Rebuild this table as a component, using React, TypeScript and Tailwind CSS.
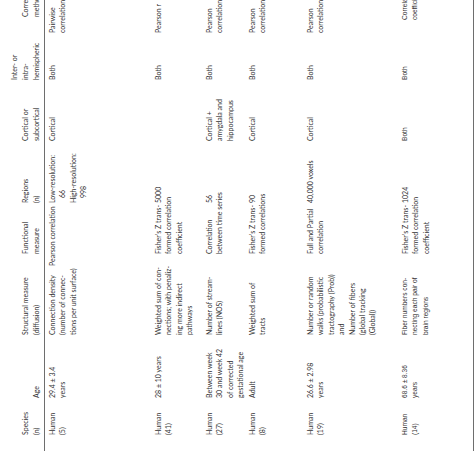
const colW = [
  "w-[37px]",
  "w-[63px]",
  "w-[81px]",
  "w-[51px]",
  "w-[62px]",
  "w-[61px]",
  "w-[47px]",
  "w-[60px]",
];

type Cell = { lines: string[]; cls?: string; lineCls?: string[] };

const header: Cell[] = [
  { lines: ["Species", "(n)"] },
  { lines: ["Age"] },
  { lines: ["Structural measure", "(diffusion)"] },
  { lines: ["Functional", "measure"] },
  { lines: ["Regions", "(n)"] },
  { lines: ["Cortical or", "subcortical"] },
  { lines: ["Inter- or", "intra-", "hemispheric"] },
  { lines: ["Correlation", "method"], cls: "pl-[16px]" },
];

const arial = "font-['Liberation_Sans',Arial,sans-serif] text-[6.6px]";

const rows: { h: string; cells: Cell[] }[] = [
  {
    h: "h-[106px]",
    cells: [
      { lines: ["Human", "(5)"] },
      { lines: ["29.4 ± 3.4", "years"] },
      { lines: ["Connection density", "(number of connec-", "tions per unit surface)"] },
      { lines: ["Pearson correlation"], cls: "-ml-[12px] mr-[12px]" },
      {
        lines: ["Low-resolution:", "66", "High-resolution:", "998"],
        lineCls: ["", "pl-[5px]", "", "pl-[5px]"],
      },
      { lines: ["Cortical"] },
      { lines: ["Both"] },
      { lines: ["Pairwise", "correlation"] },
    ],
  },
  {
    h: "h-[51px]",
    cells: [
      { lines: ["Human", "(41)"] },
      { lines: ["28 ± 10 years"] },
      { lines: ["Weighted sum of con-", "nections; with penaliz-", "ing more indirect", "pathways"] },
      { lines: ["Fisher’s Z trans-", "formed correlation", "coefficient"] },
      { lines: ["5000"] },
      { lines: [] },
      { lines: ["Both"] },
      { lines: ["Pearson r"] },
    ],
  },
  {
    h: "h-[43px]",
    cells: [
      { lines: ["Human", "(27)"] },
      { lines: ["Between week", "30 and week 42", "of corrected", "gestational age"] },
      { lines: ["Number of stream-", "lines (NOS)"] },
      { lines: ["Correlation", "between time series"] },
      { lines: ["56"] },
      { lines: ["Cortical +", "amygdala and", "hippocampus"] },
      { lines: ["Both"] },
      { lines: ["Pearson", "correlation"] },
    ],
  },
  {
    h: "h-[58px]",
    cells: [
      { lines: ["Human", "(8)"] },
      { lines: ["Adult"] },
      { lines: ["Weighted sum of", "tracts"] },
      { lines: ["Fisher’s Z trans-", "formed correlations"] },
      { lines: ["90"] },
      { lines: ["Cortical"] },
      { lines: ["Both"] },
      { lines: ["Pearson", "correlation"] },
    ],
  },
  {
    h: "h-[95px]",
    cells: [
      { lines: ["Human", "(19)"] },
      { lines: ["26.6 ± 2.98", "years"] },
      {
        lines: [
          "Number or random",
          "walks (probabilistic",
          "tractography (Prob))",
          "and",
          "Number of fibers",
          "(global tracking",
          "(Global))",
        ],
      },
      { lines: ["Full and Partial", "correlation"] },
      { lines: ["40,000 voxels"] },
      { lines: ["Cortical"] },
      { lines: ["Both"] },
      { lines: ["Pearson", "correlation"] },
    ],
  },
  {
    h: "h-[76px] border-b border-[#6e6e6e]",
    cells: [
      { lines: ["Human", "(14)"], cls: arial },
      { lines: ["68.6 ± 8.36", "years"], cls: arial },
      { lines: ["Fiber numbers con-", "necting each pair of", "brain regions"], cls: arial },
      { lines: ["Fisher’s Z trans-", "formed correlation", "coefficient"] },
      { lines: ["1024"] },
      { lines: ["Both"], cls: arial },
      { lines: ["Both"], cls: arial },
      { lines: ["Correlation", "coefficient"], cls: `pl-[13px] ${arial}` },
    ],
  },
];

function CellBox({ cell, i, header }: { cell: Cell; i: number; header?: boolean }) {
  return (
    <div
      className={`${colW[i]} shrink-0 ${header ? "flex flex-col justify-end" : ""} ${cell.cls ?? ""}`}
    >
      {cell.lines.map((l, k) => (
        <div key={k} className={`whitespace-nowrap ${cell.lineCls?.[k] ?? ""}`}>
          {l}
        </div>
      ))}
    </div>
  );
}

export default function App() {
  return (
    <div className="w-[474px] h-[474px] overflow-hidden bg-white relative">
      {/* the whole table is set sideways, as on the printed page */}
      <div className="w-[474px] h-[474px] -rotate-90">
        <div className="ml-[11px] w-[520px] -mt-[12px] text-[7px] leading-[10.4px] text-[#333] font-['Lato',sans-serif]">
          {/* Header */}
          <div className="flex pl-[16px] h-[45px] pb-[2px] leading-[11px] border-b border-[#6e6e6e]">
            {header.map((c, i) => (
              <CellBox key={i} cell={c} i={i} header />
            ))}
          </div>

          {/* Body rows */}
          {rows.map((r, ri) => (
            <div key={ri} className={`flex pl-[16px] pt-[2px] ${r.h}`}>
              {r.cells.map((c, i) => (
                <CellBox key={i} cell={c} i={i} />
              ))}
            </div>
          ))}
        </div>
      </div>
    </div>
  );
}
